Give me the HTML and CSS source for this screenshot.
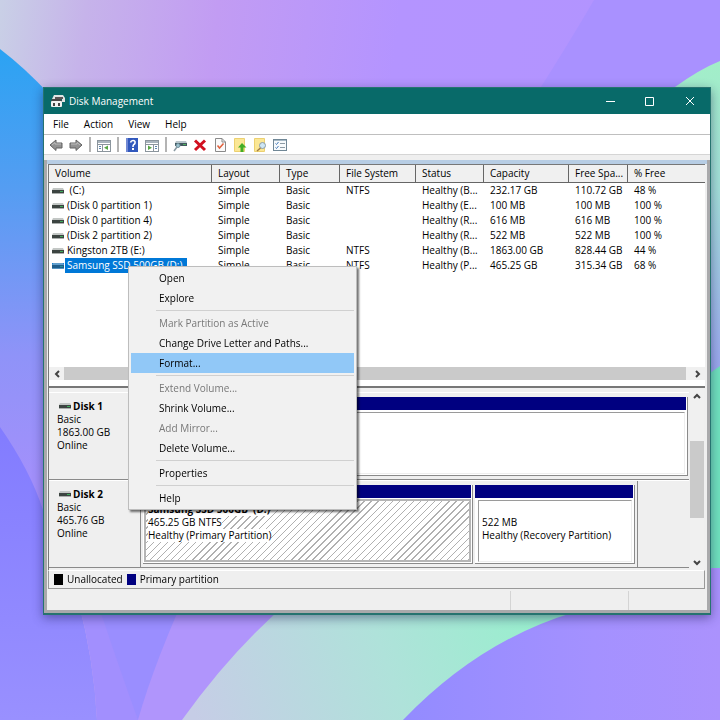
FILE: index.html
```html
<!DOCTYPE html>
<html lang="en">
<head>
  <meta charset="UTF-8" />
  <meta name="viewport" content="width=device-width, initial-scale=1" />
  <title>Disk Management</title>
  <link rel="stylesheet" href="styles.css">
</head>
<body>

  <!-- Desktop wallpaper -->
  <svg class="wallpaper" viewBox="0 0 720 720" preserveAspectRatio="none" aria-hidden="true">
    <defs>
      <linearGradient id="sky" x1="0" y1="0" x2="1" y2="0.12">
        <stop offset="0" stop-color="#c9d0e6" />
        <stop offset="0.12" stop-color="#c6b3ea" />
        <stop offset="0.3" stop-color="#c29cf3" />
        <stop offset="0.55" stop-color="#b494ff" />
        <stop offset="1" stop-color="#b194ff" />
      </linearGradient>
      <linearGradient id="leftBlue" x1="0" y1="0" x2="0" y2="1">
        <stop offset="0" stop-color="#2ba3f3" />
        <stop offset="0.3" stop-color="#559df2" />
        <stop offset="0.65" stop-color="#8f93f8" />
        <stop offset="1" stop-color="#a98ffc" />
      </linearGradient>
      <linearGradient id="indigo" x1="0" y1="0" x2="0" y2="1">
        <stop offset="0" stop-color="#827cff" />
        <stop offset="1" stop-color="#9990ff" />
      </linearGradient>
      <linearGradient id="mint" gradientUnits="userSpaceOnUse" x1="540" y1="610" x2="200" y2="730">
        <stop offset="0" stop-color="#98efcd" />
        <stop offset="0.45" stop-color="#afe2da" />
        <stop offset="1" stop-color="#c6cde6" />
      </linearGradient>
      <linearGradient id="rightStrip" x1="0" y1="0" x2="0" y2="1">
        <stop offset="0" stop-color="#a2efc8" />
        <stop offset="0.4" stop-color="#a3dfd8" />
        <stop offset="1" stop-color="#9aa5ee" />
      </linearGradient>
      <linearGradient id="corner" x1="0" y1="0" x2="1" y2="0">
        <stop offset="0" stop-color="#938bff" />
        <stop offset="0.6" stop-color="#a491ff" />
        <stop offset="1" stop-color="#ab92fd" />
      </linearGradient>
    </defs>
    <rect width="720" height="720" fill="url(#sky)" />
    <path d="M594 0H720V120H520Q565 50 594 0Z" fill="#a991ff" />
    <path d="M0 49Q25 68 50 95V520H0Z" fill="url(#leftBlue)" />
    <path d="M0 427Q30 470 43 510L78 600Q94 660 97 720H0Z" fill="url(#indigo)" />
    <path d="M60 560H330V720H97Q94 660 78 600Z" fill="#a28ffe" />
    <path d="M110 580H192Q160 650 138 720Q120 670 100 610Z" fill="#9a8eff" />
    <path d="M192 580H330V720H138Q155 660 192 580Z" fill="#b095fc" />
    <path d="M182 720Q250 625 330 570H720V720Z" fill="url(#mint)" />
    <path d="M403 720Q480 640 575 612Q650 570 720 568V720Z" fill="url(#corner)" />
    <path d="M675 87Q700 69 720 61V375H700V87Z" fill="url(#rightStrip)" />
    <path d="M700 380L720 366V568H700Z" fill="#70e2bd" />
  </svg>

  <!-- Shared icons -->
  <svg class="sprite" aria-hidden="true">
    <symbol id="drive" viewBox="0 0 12 6">
      <path d="M1 0H11L12 2H0Z" fill="#c3c7c5" />
      <rect y="2" width="12" height="3" fill="#3c4441" />
      <rect x="8" y="3" width="3" height="1" fill="#3fae5c" />
      <rect y="5" width="12" height="1" fill="#aaaeac" />
    </symbol>
    <symbol id="arrow" viewBox="0 0 14 12">
      <path d="M1 6L7 1V4H13V9H7V11.500Z" fill="#929292" stroke="#636363" stroke-linejoin="round" />
      <path d="M3 6L6 3.500V5H12" fill="none" stroke="#bdbdbd" />
    </symbol>
    <symbol id="chevron" viewBox="0 0 8 8">
      <path d="M1 6L4 3L7 6" fill="none" stroke="#444" stroke-width="2" />
    </symbol>
  </svg>

  <main class="window">
    <header class="titlebar">
      <svg class="app-icon" viewBox="0 0 15 14" aria-hidden="true">
        <path d="M4 1H13L15 4V8H12V5H2Z" fill="#e1e4e4" />
        <path d="M5 3H13V5H5Z" fill="#5b5555" />
        <path d="M2 5H11L12 8H1Z" fill="#4c4848" />
        <rect x="1" y="7" width="11" height="6" rx="1" fill="#f1f1f1" />
        <rect x="3" y="9" width="2" height="3" fill="#444" />
        <rect x="8" y="9" width="2" height="3" fill="#444" />
      </svg>
      <h1>Disk Management</h1>
      <button type="button" class="caption" aria-label="Minimize">
        <svg viewBox="0 0 10 10"><path d="M1 5.500H10" /></svg>
      </button>
      <button type="button" class="caption" aria-label="Maximize">
        <svg viewBox="0 0 10 10"><path d="M.5 1.500H8.500V9.500H.5Z" /></svg>
      </button>
      <button type="button" class="caption" aria-label="Close">
        <svg viewBox="0 0 10 10"><path d="M1 1L9 9M9 1L1 9" /></svg>
      </button>
    </header>

    <nav class="menubar" aria-label="Main menu">
      <button type="button">File</button>
      <button type="button">Action</button>
      <button type="button">View</button>
      <button type="button">Help</button>
    </nav>

    <div class="toolbar" role="toolbar" aria-label="Tools">
      <button type="button" aria-label="Back"><svg viewBox="0 0 14 14"><use href="#arrow" y="1" width="14" height="12" /></svg></button>
      <button type="button" aria-label="Forward"><svg class="flip" viewBox="0 0 14 14"><use href="#arrow" y="1" width="14" height="12" /></svg></button>
      <span class="divider"></span>
      <button type="button" aria-label="Show or hide console tree">
        <svg viewBox="0 0 14 14">
          <rect x=".5" y="2.500" width="13" height="11" fill="#fff" stroke="#8b959d" />
          <path d="M1 3H13V5H1Z" fill="#a9b4bd" />
          <path d="M1 6.500H13M5.500 6V13" stroke="#8b959d" fill="none" />
          <path d="M2 8H4V9H2ZM2 10H4V11H2Z" fill="#5c83ad" />
          <path d="M11 7.500V12L7 9.800Z" fill="#57a645" />
        </svg>
      </button>
      <span class="divider"></span>
      <button type="button" aria-label="Help">
        <svg viewBox="0 0 14 14">
          <rect x="1" width="12" height="14" fill="#3158bd" />
          <rect x="1" width="2" height="14" fill="#7189d4" />
          <path d="M5.500 4.500Q6 2.500 8 2.500Q10.500 2.500 10 5Q9.800 6 8.500 6.800Q8 7.200 8 9" fill="none" stroke="#fff" stroke-width="1.600" />
          <rect x="7" y="10" width="2" height="2" fill="#fff" />
        </svg>
      </button>
      <button type="button" aria-label="Show or hide action pane">
        <svg viewBox="0 0 14 14">
          <rect x=".5" y="2.500" width="13" height="11" fill="#fff" stroke="#8b959d" />
          <path d="M1 3H13V5H1Z" fill="#a9b4bd" />
          <path d="M1 6.500H13M8.500 6V13" stroke="#8b959d" fill="none" />
          <path d="M10 8H12V9H10ZM10 10H12V11H10Z" fill="#5c83ad" />
          <path d="M3 7.500V12L7 9.800Z" fill="#57a645" />
        </svg>
      </button>
      <span class="divider"></span>
      <button type="button" aria-label="Rescan disks">
        <svg viewBox="0 0 14 14">
          <path d="M3 3H13L14 5H2Z" fill="#b9c5cb" />
          <rect x="2" y="5" width="12" height="3" fill="#42585f" />
          <rect x="10" y="6" width="3" height="1" fill="#4fb05f" />
          <circle cx="5" cy="7.500" r="2" fill="#9cc3cf" stroke="#6f8f9b" />
          <path d="M4 9L1 13" stroke="#8a9aa2" stroke-width="1.500" />
        </svg>
      </button>
      <button type="button" aria-label="Delete">
        <svg viewBox="0 0 14 14"><path d="M2 2.500L12 12M12 2.500L2 12" stroke="#d11020" stroke-width="3" /></svg>
      </button>
      <button type="button" aria-label="Properties">
        <svg viewBox="0 0 14 14">
          <path d="M2.500 .5H9L12.500 4V13.500H2.500Z" fill="#fafafa" stroke="#8a8a8a" />
          <path d="M9 .5V4H12.500" fill="none" stroke="#8a8a8a" />
          <path d="M4.500 7.500L6.500 10L10.500 5.500" fill="none" stroke="#e0603c" stroke-width="1.500" />
        </svg>
      </button>
      <button type="button" aria-label="Open folder">
        <svg viewBox="0 0 14 14">
          <path d="M1.500 .5H11.500V13.500H1.500Z" fill="#fbe795" stroke="#ecd070" />
          <path d="M9 5L13.500 9.500H10.500V14H7.500V9.500H5Z" fill="#43ad25" />
        </svg>
      </button>
      <button type="button" aria-label="Explore folder">
        <svg viewBox="0 0 14 14">
          <path d="M1.500 .5H11.500V13.500H1.500Z" fill="#fbe795" stroke="#ecd070" />
          <circle cx="9.500" cy="7.500" r="3" fill="#cde6f5" stroke="#8b9ba5" />
          <path d="M7.500 10L4 13" stroke="#a07c45" stroke-width="1.500" />
        </svg>
      </button>
      <button type="button" aria-label="View options">
        <svg viewBox="0 0 14 14">
          <rect x=".5" y="1.500" width="13" height="11" fill="#f7fafc" stroke="#708796" />
          <path d="M1 2.500H13" stroke="#a7bac7" />
          <path d="M2.500 5.500L3.500 6.500L5.500 4M2.500 9.500L3.500 10.500L5.500 8" fill="none" stroke="#4379ba" />
          <path d="M7 5.500H12M7 9.500H12" stroke="#8c9aa4" />
        </svg>
      </button>
    </div>

    <div class="client">
      <section class="volumes" aria-label="Volumes">
        <table>
          <colgroup>
            <col class="c-volume"><col class="c-layout"><col class="c-type"><col class="c-fs">
            <col class="c-status"><col class="c-capacity"><col class="c-space"><col>
          </colgroup>
          <thead>
            <tr>
              <th>Volume</th><th>Layout</th><th>Type</th><th>File System</th>
              <th>Status</th><th>Capacity</th><th>Free Spa...</th><th>% Free</th>
            </tr>
          </thead>
          <tbody>
            <tr>
              <td><svg class="drive"><use href="#drive" /></svg><span class="name">&nbsp;(C:)</span></td>
              <td>Simple</td><td>Basic</td><td>NTFS</td><td>Healthy (B...</td><td>232.17 GB</td><td>110.72 GB</td><td>48 %</td>
            </tr>
            <tr>
              <td><svg class="drive"><use href="#drive" /></svg><span class="name">(Disk 0 partition 1)</span></td>
              <td>Simple</td><td>Basic</td><td></td><td>Healthy (E...</td><td>100 MB</td><td>100 MB</td><td>100 %</td>
            </tr>
            <tr>
              <td><svg class="drive"><use href="#drive" /></svg><span class="name">(Disk 0 partition 4)</span></td>
              <td>Simple</td><td>Basic</td><td></td><td>Healthy (R...</td><td>616 MB</td><td>616 MB</td><td>100 %</td>
            </tr>
            <tr>
              <td><svg class="drive"><use href="#drive" /></svg><span class="name">(Disk 2 partition 2)</span></td>
              <td>Simple</td><td>Basic</td><td></td><td>Healthy (R...</td><td>522 MB</td><td>522 MB</td><td>100 %</td>
            </tr>
            <tr>
              <td><svg class="drive"><use href="#drive" /></svg><span class="name">Kingston 2TB (E:)</span></td>
              <td>Simple</td><td>Basic</td><td>NTFS</td><td>Healthy (B...</td><td>1863.00 GB</td><td>828.44 GB</td><td>44 %</td>
            </tr>
            <tr class="selected">
              <td><svg class="drive"><use href="#drive" /></svg><span class="name">Samsung SSD 500GB (D:)</span></td>
              <td>Simple</td><td>Basic</td><td>NTFS</td><td>Healthy (P...</td><td>465.25 GB</td><td>315.34 GB</td><td>68 %</td>
            </tr>
          </tbody>
        </table>
        <div class="hscroll">
          <button type="button" aria-label="Scroll left"><svg class="left"><use href="#chevron" /></svg></button>
          <span class="thumb"></span>
          <button type="button" aria-label="Scroll right"><svg class="right"><use href="#chevron" /></svg></button>
        </div>
      </section>

      <section class="disks" aria-label="Disks">
        <div class="disk-list">
          <div class="disk">
            <div class="disk-info">
              <h2><svg class="drive"><use href="#drive" /></svg>Disk 1</h2>
              <p>Basic</p>
              <p>1863.00 GB</p>
              <p>Online</p>
            </div>
            <div class="partitions">
              <div class="partition"><div class="bar"></div><div class="box"></div></div>
            </div>
          </div>
          <div class="disk">
            <div class="disk-info">
              <h2><svg class="drive"><use href="#drive" /></svg>Disk 2</h2>
              <p>Basic</p>
              <p>465.76 GB</p>
              <p>Online</p>
            </div>
            <div class="partitions short">
              <div class="partition hatched">
                <div class="bar"></div>
                <div class="box">
                  <p><strong>Samsung SSD 500GB&nbsp; (D:)</strong></p>
                  <p>465.25 GB NTFS</p>
                  <p>Healthy (Primary Partition)</p>
                </div>
              </div>
              <div class="partition recovery">
                <div class="bar"></div>
                <div class="box">
                  <p>522 MB</p>
                  <p>Healthy (Recovery Partition)</p>
                </div>
              </div>
            </div>
          </div>
        </div>
        <div class="vscroll">
          <button type="button" aria-label="Scroll up"><svg><use href="#chevron" /></svg></button>
          <div class="track"><span class="thumb"></span></div>
          <button type="button" aria-label="Scroll down"><svg class="down"><use href="#chevron" /></svg></button>
        </div>
      </section>

      <div class="legend">
        <span class="swatch black"></span>Unallocated
        <span class="swatch navy"></span>Primary partition
      </div>
    </div>

    <footer class="statusbar"><span></span><span></span><span></span></footer>

    <!-- Context menu of the selected volume -->
    <div class="context-menu" role="menu">
      <button type="button" role="menuitem">Open</button>
      <button type="button" role="menuitem">Explore</button>
      <hr>
      <button type="button" role="menuitem" disabled>Mark Partition as Active</button>
      <button type="button" role="menuitem">Change Drive Letter and Paths...</button>
      <button type="button" role="menuitem" class="active">Format...</button>
      <hr>
      <button type="button" role="menuitem" disabled>Extend Volume...</button>
      <button type="button" role="menuitem">Shrink Volume...</button>
      <button type="button" role="menuitem" disabled>Add Mirror...</button>
      <button type="button" role="menuitem">Delete Volume...</button>
      <hr>
      <button type="button" role="menuitem">Properties</button>
      <hr>
      <button type="button" role="menuitem">Help</button>
    </div>
  </main>

</body>
</html>
```
FILE: styles.css
```css
* {
  box-sizing: border-box;
}
body {
  margin: 0;
  min-height: 100vh;
  display: flex;
  padding: 87px 9px 105px 43px;
  font-family: "Open Sans", "Noto Sans", sans-serif;
  font-size: 10px;
  line-height: 13px;
  color: #000;
}
h1, h2, p {
  margin: 0;
  font-size: inherit;
}
button {
  border: none;
  background: none;
  padding: 0;
  font: inherit;
  color: inherit;
}
svg {
  display: block;
}
.wallpaper {
  position: fixed;
  inset: 0;
  width: 100%;
  height: 100%;
  z-index: -1;
}
.sprite {
  position: absolute;
  width: 0;
  height: 0;
}

/* Window frame */
.window {
  position: relative;
  flex: 1;
  min-width: 0;
  display: flex;
  flex-direction: column;
  background: #efefef;
  border: 1px solid #26736f;
  border-bottom-width: 2px;
  box-shadow: 0 3px 10px rgba(20, 20, 70, 0.45);
}
.titlebar {
  display: flex;
  align-items: center;
  height: 26px;
  padding-left: 6px;
  background: #086a69;
  color: #fff;
}
.titlebar h1 {
  flex: 1;
  margin-left: 4px;
  font-weight: 400;
}
.app-icon {
  width: 15px;
  height: 14px;
}
.caption {
  width: 40px;
  height: 26px;
  display: flex;
  align-items: center;
  justify-content: center;
}
.caption svg {
  width: 10px;
  height: 10px;
  fill: none;
  stroke: #fff;
}

/* Menu and toolbar */
.menubar {
  display: flex;
  gap: 15px;
  height: 21px;
  padding-left: 9px;
  background: #fff;
  border-bottom: 1px solid #bfbfbf;
}
.toolbar {
  display: flex;
  align-items: center;
  gap: 6px;
  height: 20px;
  padding-left: 5px;
  background: #fff;
  border-bottom: 1px solid #d5d5d5;
}
.toolbar svg {
  width: 14px;
  height: 14px;
}
.toolbar .flip {
  transform: scaleX(-1);
}
.divider {
  width: 2px;
  height: 15px;
  background: #b4b4b4;
}

/* Client area */
.client {
  flex: 1;
  display: flex;
  flex-direction: column;
  margin-top: 5px;
  padding: 4px 2px 0 1px;
  background: #efefef;
  border: solid #a9a9ab;
  border-width: 0 3px;
  box-shadow: inset 0 4px #b7cde4;
}
.volumes {
  flex: 1;
  display: flex;
  flex-direction: column;
  background: #fff;
  border: 1px solid #777;
  border-width: 1px 0 2px 1px;
}
table {
  width: 100%;
  table-layout: fixed;
  border-collapse: separate;
  border-spacing: 0;
}
.c-volume { width: 163px; }
.c-layout { width: 68px; }
.c-type { width: 60px; }
.c-fs { width: 76px; }
.c-status { width: 68px; }
.c-capacity { width: 85px; }
.c-space { width: 59px; }
th, td {
  padding: 0 0 0 6px;
  text-align: left;
  font-weight: 400;
  white-space: nowrap;
}
th {
  height: 18px;
  background: #f0f0f0;
  border-right: 1px solid #666;
  border-bottom: 1px solid #666;
}
th:last-child {
  border-right: none;
}
td {
  height: 15px;
}
td:first-child {
  display: flex;
  align-items: center;
  padding-left: 3px;
}
.drive {
  flex: none;
  width: 12px;
  height: 6px;
}
.name {
  margin-left: 1px;
  padding: 1px 5px 1px 2px;
}
.selected .name {
  background: #0078d7;
  color: #fff;
}
.selected .drive {
  background: #0078d7;
}
.selected .drive use {
  opacity: 0.5;
}

/* Scrollbars */
.hscroll {
  display: flex;
  height: 13px;
  margin-top: auto;
  margin-bottom: 6px;
  background: #f0f0f0;
}
.hscroll button {
  width: 15px;
}
.hscroll .thumb {
  flex: 1;
  margin-right: 4px;
  background: #cacaca;
}
.hscroll svg, .vscroll svg {
  width: 8px;
  height: 8px;
  margin: auto;
}
.left { transform: rotate(-90deg); }
.right { transform: rotate(90deg); }
.down { transform: rotate(180deg); }
.vscroll {
  display: flex;
  flex-direction: column;
  width: 14px;
  background: #f0f0f0;
}
.vscroll button {
  height: 15px;
}
.track {
  flex: 1;
  padding-top: 38px;
}
.track .thumb {
  display: block;
  height: 77px;
  background: #cacaca;
}

/* Graphical disk view */
.disks {
  display: flex;
  gap: 1px;
  height: 182px;
  padding-right: 1px;
  border-left: 1px solid #777;
}
.disk-list {
  flex: 1;
  padding-top: 4px;
}
.disk {
  display: flex;
  height: 88px;
  border-top: 1px solid #fff;
  border-bottom: 1px solid #8a8a8a;
}
.disk-info {
  width: 92px;
  padding: 6px 0 0 8px;
  border-right: 1px solid #8a8a8a;
}
.disk-info h2 {
  display: flex;
  align-items: center;
  gap: 2px;
  padding-left: 2px;
  line-height: 14px;
  font-weight: 700;
}
.partitions {
  flex: 1;
  display: flex;
  gap: 2px;
  padding: 4px 1px 3px 2px;
}
.partitions.short {
  flex: none;
  width: 497px;
  padding-right: 2px;
  border-right: 1px solid #8a8a8a;
}
.partition {
  flex: 1;
  display: flex;
  flex-direction: column;
  padding-bottom: 1px;
  background: #fff;
  border-right: 1px solid #8a8a8a;
  border-bottom: 1px solid #8a8a8a;
}
.partition.recovery {
  flex: 0 0 160px;
}
.bar {
  height: 13px;
  background: #000080;
  border-right: 1px solid #fff;
}
.box {
  flex: 1;
  margin: 2px 2px 0 3px;
  padding: 6px 3px;
  border: 1px solid #9a9a9a;
  border-right-color: #eee;
  border-bottom-color: #eee;
}
.recovery .box {
  padding-top: 15px;
}
.hatched .box {
  margin: 1px 1px 0 1px;
  padding: 2px;
  border: 2px solid #b5b5b5;
  background: repeating-linear-gradient(135deg, #fff 0, #fff 4px, #b0b0b0 4px, #b0b0b0 5px);
}
.hatched p {
  width: max-content;
  background: #fff;
}

/* Legend and status bar */
.legend {
  display: flex;
  align-items: center;
  gap: 4px;
  height: 19px;
  padding-left: 5px;
  border: 1px solid #999;
  border-top-color: #fff;
}
.swatch {
  width: 9px;
  height: 11px;
}
.black { background: #000; }
.navy { background: #000080; }
.statusbar {
  display: grid;
  grid-template-columns: 1fr 118px 79px;
  height: 24px;
  padding-top: 2px;
  border: 3px solid #a9a9ab;
  border-top: none;
}
.statusbar span + span {
  border-left: 1px solid #d4d4d4;
}

/* Context menu */
.context-menu {
  position: absolute;
  left: 84px;
  top: 178px;
  width: 229px;
  padding: 1px 2px;
  background: #f1f1f1;
  border: 1px solid #bdbdbd;
  box-shadow: 2px 2px 2px rgba(0, 0, 0, 0.55);
}
.context-menu button {
  display: block;
  width: 100%;
  height: 20px;
  padding-left: 28px;
  text-align: left;
}
.context-menu button:disabled {
  color: #787878;
}
.context-menu .active {
  background: #91c8f7;
}
.context-menu hr {
  height: 1px;
  margin: 2px 0 2px 25px;
  border: none;
  background: #d0d0d0;
}
```
